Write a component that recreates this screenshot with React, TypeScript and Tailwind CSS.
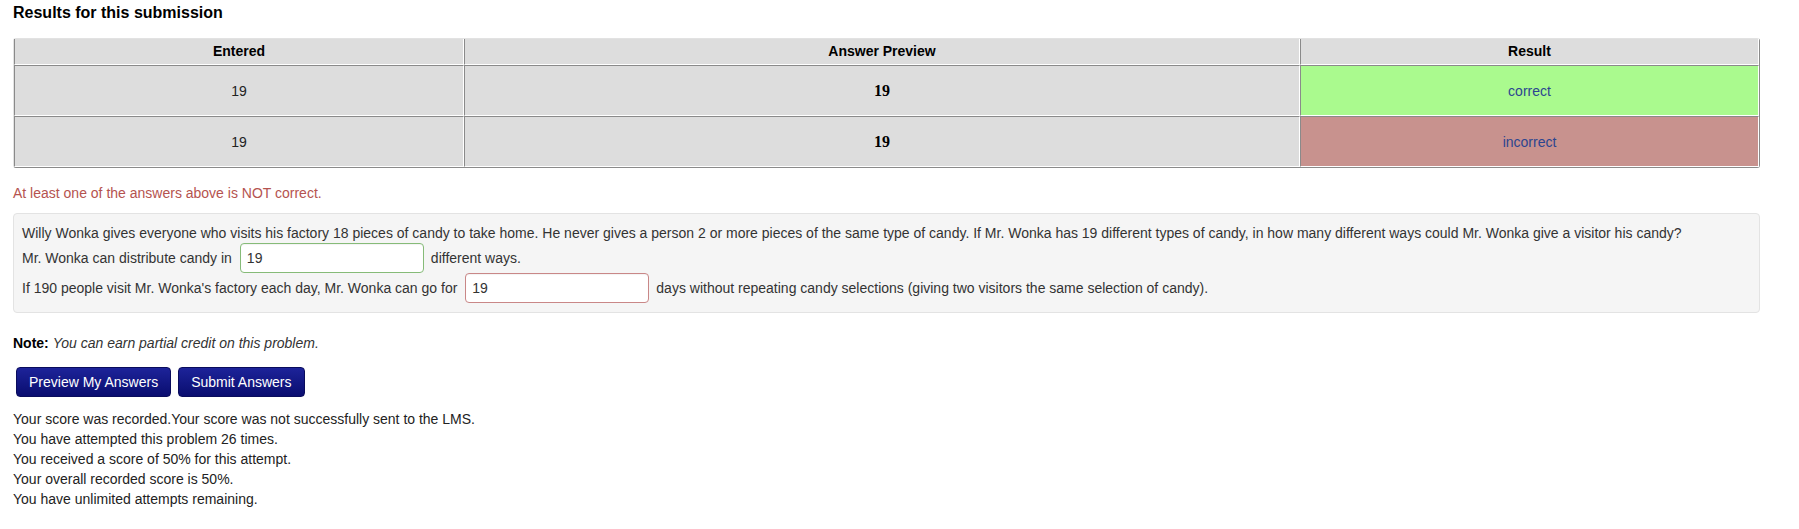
const rows = [
  { entered: "19", preview: "19", result: "correct", ok: true },
  { entered: "19", preview: "19", result: "incorrect", ok: false },
];

const status = [
  "Your score was recorded.Your score was not successfully sent to the LMS.",
  "You have attempted this problem 26 times.",
  "You received a score of 50% for this attempt.",
  "Your overall recorded score is 50%.",
  "You have unlimited attempts remaining.",
];

function AnswerInput({ tone }: { tone: "good" | "bad" }) {
  return (
    <input
      readOnly
      defaultValue="19"
      className={`h-[30px] w-[184px] rounded-[4px] border bg-white px-[6px] text-[14px] leading-[20px] text-[#333] outline-none ${
        tone === "good"
          ? "border-[#86bb78] shadow-[inset_0_1px_1px_rgba(0,0,0,0.05)]"
          : "border-[#c98787] shadow-[inset_0_1px_1px_rgba(0,0,0,0.05)]"
      }`}
    />
  );
}

export default function App() {
  return (
    <div className="min-h-[529px] bg-white pl-[13px] font-['Liberation_Sans',Arial,sans-serif] text-[14px] leading-[20px] text-[#333]">
      <div className="w-[1747px]">
        <h3 className="mt-[3px] text-[16px] font-bold leading-[20px] text-black">Results for this submission</h3>

        <table className="mt-[15px] w-full table-fixed border-separate border-spacing-0 rounded-[3px] border border-t-[#e2e2e2] border-l-[#e2e2e2] border-r-[#8a8a8a] border-b-[#8a8a8a]">
          <colgroup>
            <col className="w-[450px]" />
            <col className="w-[836px]" />
            <col />
          </colgroup>
          <thead>
            <tr>
              {["Entered", "Answer Preview", "Result"].map((h) => (
                <th
                  key={h}
                  scope="col"
                  className="border-b border-l border-r border-b-white border-l-[#8a8a8a] border-r-white bg-[#dddddd] pt-[2px] pb-[3px] text-center text-[14px] font-bold leading-[20px] text-black"
                >
                  {h}
                </th>
              ))}
            </tr>
          </thead>
          <tbody>
            {rows.map((r, i) => (
              <tr key={i}>
                <td className="border border-t-[#8a8a8a] border-l-[#8a8a8a] border-r-white border-b-white bg-[#dddddd] pt-[15px] pb-[14px] text-center leading-[20px] text-[#222]">
                  {r.entered}
                </td>
                <td className="border border-t-[#8a8a8a] border-l-[#8a8a8a] border-r-white border-b-white bg-[#dddddd] pt-[15px] pb-[14px] text-center font-['Liberation_Serif','Times_New_Roman',serif] text-[16px] font-bold leading-[20px] text-black">
                  {r.preview}
                </td>
                <td
                  className={`border border-t-[#8a8a8a] border-l-[#8a8a8a] border-r-white border-b-white pt-[15px] pb-[14px] text-center leading-[20px] text-[#2c4590] ${
                    r.ok ? "bg-[#aafa8e]" : "bg-[#c8928e]"
                  }`}
                >
                  {r.result}
                </td>
              </tr>
            ))}
          </tbody>
        </table>

        <div className="mt-[15px] text-[#b5534f]">At least one of the answers above is NOT correct.</div>

        <div className="mt-[10px] rounded-[4px] border border-[#e3e3e3] bg-[#f5f5f5] px-[8px] pt-[9px] pb-[9px]">
          <div>
            Willy Wonka gives everyone who visits his factory 18 pieces of candy to take home. He never gives a person 2 or
            more pieces of the same type of candy. If Mr. Wonka has 19 different types of candy, in how many different ways
            could Mr. Wonka give a visitor his candy?
          </div>
          <div className="flex h-[30px] items-center">
            <span>Mr. Wonka can distribute candy in</span>
            <span className="ml-[8px] mr-[7px] flex">
              <AnswerInput tone="good" />
            </span>
            <span>different ways.</span>
          </div>
          <div className="flex h-[30px] items-center">
            <span>If 190 people visit Mr. Wonka's factory each day, Mr. Wonka can go for</span>
            <span className="ml-[8px] mr-[7px] flex">
              <AnswerInput tone="bad" />
            </span>
            <span>days without repeating candy selections (giving two visitors the same selection of candy).</span>
          </div>
        </div>

        <div className="mt-[20px]">
          <b className="text-black">Note:</b> <i>You can earn partial credit on this problem.</i>
        </div>

        <div className="mt-[14px] ml-[3px] flex gap-[7px]">
          <button className="h-[30px] rounded-[4px] border border-[#0a0c5c] bg-gradient-to-b from-[#1d2399] to-[#0a0d70] px-[12px] text-[14px] leading-[20px] text-white">
            Preview My Answers
          </button>
          <button className="h-[30px] rounded-[4px] border border-[#0a0c5c] bg-gradient-to-b from-[#1d2399] to-[#0a0d70] px-[12px] text-[14px] leading-[20px] text-white">
            Submit Answers
          </button>
        </div>

        <div className="mt-[12px] text-[#222]">
          {status.map((s) => (
            <div key={s}>{s}</div>
          ))}
        </div>
      </div>
    </div>
  );
}
